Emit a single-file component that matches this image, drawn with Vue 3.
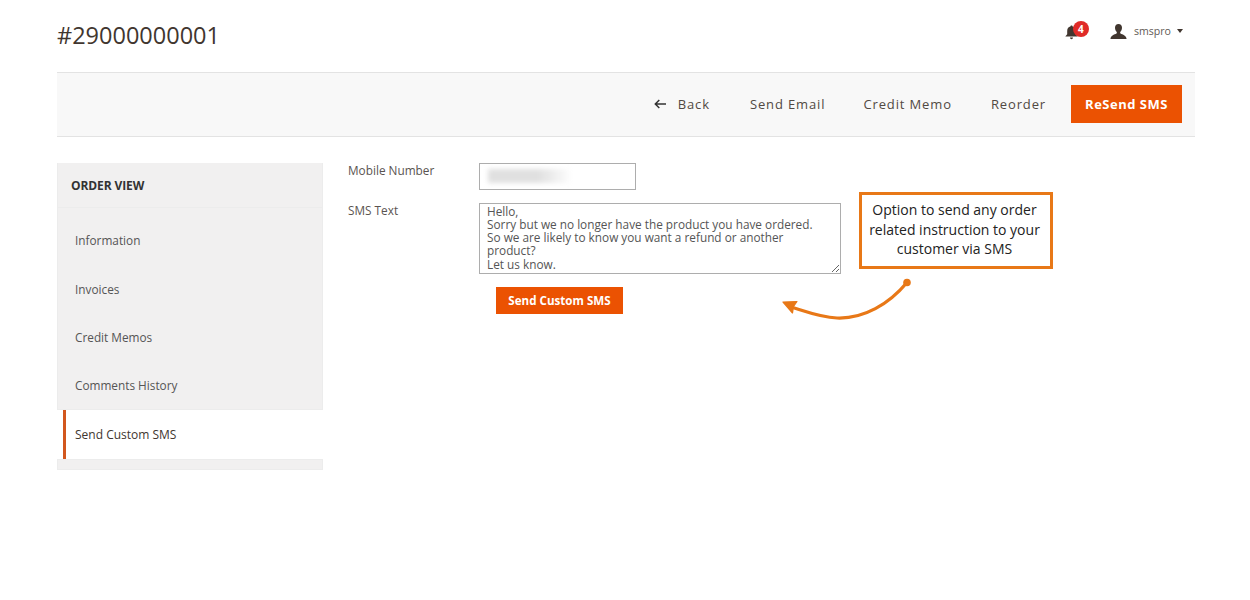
<script setup>
const menu = ['Information', 'Invoices', 'Credit Memos', 'Comments History']
const actions = ['Send Email', 'Credit Memo', 'Reorder']
const sms = `Hello,
Sorry but we no longer have the product you have ordered.
So we are likely to know you want a refund or another
product?
Let us know.`
</script>

<template>
  <div class="page">
    <header class="top">
      <h1>#29000000001</h1>
      <div class="user-area">
        <span class="bell">
          <svg width="15" height="15" viewBox="0 0 14 15"><path fill="#41362f" d="M7 0.5c.7 0 1.1.5 1.1 1.1C10.200 2.100 11.300 3.800 11.300 6v3.200l1.900 2.300H.8l1.900-2.300V6c0-2.200 1.100-3.900 3.200-4.400C5.900 1 6.300.5 7 .5zM5.500 12.500h3C8.400 13.500 7.800 14.200 7 14.200s-1.400-.7-1.500-1.700z"/></svg>
          <b class="badge">4</b>
        </span>
        <span class="user">
          <svg width="17" height="15" viewBox="0 0 17 15"><path fill="#41362f" d="M8.500 0C6.300 0 5 1.500 5 3.700c0 1.700.8 3.300 1.800 4.200v1.300c-.6.900-5.800 1.600-6.300 5.300V15h16v-.500c-.5-3.700-5.700-4.400-6.300-5.300V7.900c1-.9 1.800-2.500 1.800-4.200C12 1.500 10.700 0 8.500 0z"/></svg>
          <span class="name">smspro</span>
          <i class="caret"></i>
        </span>
      </div>
    </header>

    <nav class="actions">
      <a class="act back">
        <svg width="12" height="10" viewBox="0 0 12 10"><path fill="none" stroke="#333" stroke-width="1.500" d="M12 5H1.500M5.300 1 1.300 5l4 4"/></svg>
        Back
      </a>
      <a v-for="a in actions" :key="a" class="act">{{ a }}</a>
      <button class="resend">ReSend SMS</button>
    </nav>

    <main class="body">
      <aside class="side">
        <div class="side-title">ORDER VIEW</div>
        <div class="menu">
          <div v-for="m in menu" :key="m" class="item">{{ m }}</div>
        </div>
        <div class="active-row"><div class="active">Send Custom SMS</div></div>
        <div class="side-foot"></div>
      </aside>

      <section class="form">
        <div class="row">
          <label>Mobile Number</label>
          <div class="phone"><span class="smudge"></span></div>
        </div>
        <div class="row sms-row">
          <label>SMS Text</label>
          <textarea class="sms" :value="sms" spellcheck="false"></textarea>
        </div>
        <button class="send">Send Custom SMS</button>

        <div class="callout">Option to send any order related instruction to your customer via SMS</div>
        <svg class="arrow" width="135" height="50" viewBox="0 0 135 50">
          <circle cx="128" cy="4.500" r="3.800" fill="#e87817"/>
          <path fill="none" stroke="#e87817" stroke-width="3.200" stroke-linecap="round" d="M128 4.500C110 26 85 41 58 40 42 39.500 28 34 12 29"/>
          <path fill="#e87817" stroke="#e87817" stroke-width="1.200" stroke-linejoin="round" d="M4 24 18 23.500 14.500 28.500 13.500 35z"/>
        </svg>
      </section>
    </main>
  </div>
</template>

<style>
html, body { margin: 0; background: #fff; }
</style>

<style scoped>
.page {
  width: 1250px;
  height: 600px;
  box-sizing: border-box;
  padding: 0 55px 0 57px;
  font-family: "Open Sans", "Noto Sans", sans-serif;
  color: #41362f;
  overflow: hidden;
}
.top {
  height: 72px;
  display: flex;
  justify-content: space-between;
  align-items: flex-start;
}
h1 {
  margin: 19px 0 0;
  font-size: 23.500px;
  line-height: 32px;
  font-weight: 400;
  color: #41362f;
}
.user-area {
  display: flex;
  align-items: center;
  gap: 31px;
  margin: 22px 12px 0 0;
}
.bell { position: relative; display: flex; margin-top: 3px; }
.badge {
  position: absolute;
  left: 9px;
  top: -4px;
  width: 16px;
  height: 16px;
  border-radius: 50%;
  background: #e02b27;
  color: #fff;
  font-size: 10px;
  line-height: 16px;
  text-align: center;
}
.user { display: flex; align-items: center; }
.name { font-size: 10.600px; color: #5f5a56; margin-left: 7px; }
.caret {
  margin-left: 6px;
  border: 3px solid transparent;
  border-top: 4px solid #41362f;
  border-bottom: 0;
}
.actions {
  height: 62px;
  padding: 0 13px 1px 0;
  background: #f8f8f8;
  border-top: 1px solid #e3e3e3;
  border-bottom: 1px solid #e3e3e3;
  display: flex;
  align-items: center;
  justify-content: flex-end;
}
.act {
  font-size: 13px;
  font-weight: 500;
  letter-spacing: .87px;
  color: #514943;
  margin-right: 39px;
  white-space: nowrap;
}
.back { display: flex; align-items: center; gap: 12px; margin-right: 40px; }
.act:nth-child(2) { margin-right: 38px; }
.act:nth-child(4) { margin-right: 25px; }
.resend {
  width: 111px;
  height: 38px;
  border: 0;
  padding: 0;
  background: #eb5202;
  color: #fff;
  font: 700 13px "Open Sans", sans-serif;
  letter-spacing: .5px;
}
.body {
  display: flex;
  margin-top: 26px;
}
.side { width: 266px; flex: none; font-size: 11.800px; }
.side-title {
  height: 45px;
  box-sizing: border-box;
  line-height: 45px;
  background: #f1f0f0;
  border: 1px solid #ececec;
  border-width: 0 1px 1px;
  padding-left: 13px;
  font-size: 12px;
  font-weight: 700;
  color: #333;
  letter-spacing: -.1px;
}
.menu {
  background: #f1f0f0;
  padding-top: 8.300px;
  border: 1px solid #ececec;
  border-width: 0 1px 1px;
  height: 202px;
  box-sizing: border-box;
}
.item {
  height: 48.300px;
  line-height: 48.300px;
  padding-left: 17px;
  color: #555;
}
.active-row {
  background: #fff;
  padding-left: 6px;
}
.active {
  height: 49px;
  line-height: 49px;
  border-left: 3px solid #d2571e;
  padding-left: 9px;
  font-size: 12px;
  color: #41362f;
}
.side-foot {
  height: 11px;
  box-sizing: border-box;
  background: #f1f0f0;
  border: 1px solid #ececec;
}
.form {
  position: relative;
  flex: 1;
  padding-left: 25px;
  font-size: 11.800px;
}
.row { display: flex; align-items: flex-start; }
.row label {
  width: 131px;
  flex: none;
  color: #5a5450;
  line-height: 14px;
}
.phone {
  width: 147px;
  height: 25px;
  border: 1px solid #adadad;
  display: flex;
  align-items: center;
  padding-left: 8px;
  box-sizing: content-box;
}
.smudge {
  width: 84px;
  height: 14px;
  background: linear-gradient(90deg, #e0e0e0 60%, #ffffff);
  filter: blur(2.500px);
  margin-top: -2px;
}
.sms-row { margin-top: 13px; }
.sms {
  height: 68.500px;
  box-sizing: content-box;
  border: 1px solid #adadad;
  border-radius: 0;
  margin: 0;
  padding: .5px 0 0 7px;
  width: 353px;
  font: 11.800px/13.300px "Open Sans", sans-serif;
  color: #555;
  outline: none;
  overflow: hidden;
}
.send {
  display: block;
  margin: 13px 0 0 148px;
  width: 127px;
  height: 27px;
  border: 0;
  padding: 0;
  background: #eb5202;
  color: #fff;
  font: 700 11.600px "Open Sans", sans-serif;
}
.callout {
  position: absolute;
  left: 536px;
  top: 29px;
  width: 194px;
  height: 77px;
  box-sizing: border-box;
  border: 3px solid #e87817;
  background: #fff;
  padding: 5px 6px 0 3px;
  text-align: center;
  font-size: 14px;
  line-height: 19.700px;
  color: #222;
}
.arrow {
  position: absolute;
  left: 456px;
  top: 115px;
}
</style>
